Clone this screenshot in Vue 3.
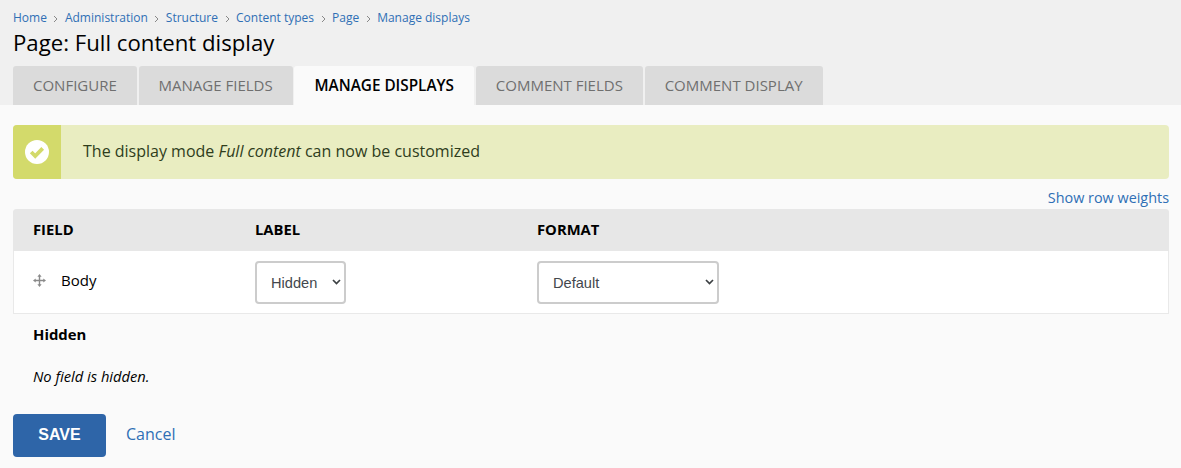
<script setup>
const crumbs = ["Home", "Administration", "Structure", "Content types", "Page", "Manage displays"];
const tabs = [
  { name: "CONFIGURE", active: false },
  { name: "MANAGE FIELDS", active: false },
  { name: "MANAGE DISPLAYS", active: true },
  { name: "COMMENT FIELDS", active: false },
  { name: "COMMENT DISPLAY", active: false },
];
</script>

<template>
  <div class="page">
    <header class="page-header">
      <nav class="breadcrumb">
        <template v-for="(crumb, index) in crumbs" :key="crumb">
          <svg v-if="index" class="crumb-sep" width="5" height="8" viewBox="0 0 5 8">
            <path d="M1 1l3 3-3 3" fill="none" stroke="#888" stroke-width="1" />
          </svg>
          <a href="#">{{ crumb }}</a>
        </template>
      </nav>
      <h1 class="page-title">Page: Full content display</h1>
      <ul class="tabs">
        <li v-for="tab in tabs" :key="tab.name" class="tab" :class="{ active: tab.active }">
          {{ tab.name }}
        </li>
      </ul>
    </header>

    <main class="main-content">
      <div class="message">
        <div class="message-icon">
          <svg width="24" height="24" viewBox="0 0 24 24">
            <circle cx="12" cy="12" r="12" fill="#fff" />
            <path d="M6.2 12l4 4 7.500-7.700" fill="none" stroke="#d3da6b" stroke-width="3.800" />
          </svg>
        </div>
        <p class="message-text">The display mode <em>Full content</em> can now be customized</p>
      </div>

      <div class="weights-row"><a href="#">Show row weights</a></div>

      <div class="field-table">
        <div class="table-row table-head">
          <div>FIELD</div>
          <div>LABEL</div>
          <div>FORMAT</div>
        </div>
        <div class="table-row table-body">
          <div class="field-name">
            <svg class="drag-handle" width="13" height="13" viewBox="0 0 13 13">
              <path
                d="M6.5 0L8.6 2.700H7.200V5.800h3.100V4.400L13 6.500l-2.700 2.100V7.200H7.200v3.100h1.400L6.500 13l-2.100-2.700h1.400V7.200H2.700v1.400L0 6.500l2.700-2.100v1.400h3.100V2.700H4.400z"
                fill="#8a8a8a"
              />
            </svg>
            <span>Body</span>
          </div>
          <div>
            <div class="select-wrap label-select">
              <select aria-label="Label">
                <option>Hidden</option>
                <option>Above</option>
                <option>Inline</option>
              </select>
              <svg class="chevron" width="9" height="6" viewBox="0 0 9 6">
                <path d="M1 1l3.500 3.500L8 1" fill="none" stroke="#3c4043" stroke-width="1.700" />
              </svg>
            </div>
          </div>
          <div>
            <div class="select-wrap format-select">
              <select aria-label="Format">
                <option>Default</option>
                <option>Summary</option>
                <option>Trimmed</option>
              </select>
              <svg class="chevron" width="9" height="6" viewBox="0 0 9 6">
                <path d="M1 1l3.500 3.500L8 1" fill="none" stroke="#3c4043" stroke-width="1.700" />
              </svg>
            </div>
          </div>
        </div>
      </div>

      <h2 class="hidden-title">Hidden</h2>
      <p class="hidden-note">No field is hidden.</p>

      <div class="actions">
        <button type="button" class="save-button">SAVE</button>
        <a href="#" class="cancel-link">Cancel</a>
      </div>
    </main>
  </div>
</template>

<style scoped>
.page {
  width: 1181px;
  height: 468px;
  overflow: hidden;
  background: #fafafa;
  color: #000;
  font-family: "Open Sans", sans-serif;
}

a {
  color: #2f6fb5;
  text-decoration: none;
}

.page-header {
  height: 105px;
  padding: 10px 13px 0;
  box-sizing: border-box;
  background: #f0f0f0;
}

.breadcrumb {
  display: flex;
  align-items: center;
  height: 16px;
  font-size: 12px;
  line-height: 16px;
}

.crumb-sep {
  margin: 1px 6.500px 0 6.500px;
}

.page-title {
  margin: 3px 0 0;
  font-size: 22.200px;
  line-height: 28px;
  font-weight: 400;
}

.tabs {
  display: flex;
  gap: 1.800px;
  margin: 9px 0 0;
  padding: 0;
  list-style: none;
}

.tab {
  height: 39px;
  padding: 0 20px;
  border-radius: 3px 3px 0 0;
  background: #dbdbdb;
  color: #6f6f6f;
  font-size: 15px;
  line-height: 39px;
}

.tab.active {
  background: #fafafa;
  color: #000;
  font-size: 15.300px;
  font-weight: 600;
}

.main-content {
  padding: 20px 12px 0 13px;
}

.message {
  display: flex;
  align-items: center;
  height: 54px;
  border-radius: 4px;
  overflow: hidden;
  background: #e9edc1;
}

.message-icon {
  display: flex;
  align-items: center;
  justify-content: center;
  flex: 0 0 48px;
  height: 100%;
  background: #d3da6b;
}

.message-text {
  margin: -2px 0 0 22px;
  color: #2f3d1c;
  font-size: 16px;
  line-height: 22px;
}

.weights-row {
  height: 30px;
  text-align: right;
  font-size: 14.400px;
  line-height: 38px;
}

.field-table {
  border: 1px solid #e9e9e9;
  border-top: 0;
  border-radius: 4px 4px 0 0;
  background: #fff;
}

.table-row {
  display: grid;
  grid-template-columns: 222px 282px 1fr;
  padding-left: 19px;
}

.table-head {
  height: 42px;
  margin: 0 -1px;
  padding: 0 0 2px 20px;
  box-sizing: border-box;
  align-items: center;
  border-radius: 4px 4px 0 0;
  background: #e7e7e7;
  font-size: 14.800px;
  font-weight: 700;
}

.table-body {
  height: 62px;
  align-items: center;
  font-size: 15px;
}

.field-name {
  display: flex;
  align-items: center;
  gap: 15px;
  margin-top: -4px;
}

.select-wrap {
  position: relative;
  height: 43px;
  margin-top: 1px;
  box-sizing: border-box;
}

.select-wrap select {
  width: 100%;
  height: 100%;
  padding: 0 0 0 14px;
  border: 2px solid #ccc;
  border-radius: 4px;
  background: #fff;
  color: #43474d;
  font-family: "Liberation Sans", Arial, sans-serif;
  font-size: 14.600px;
  appearance: none;
}

.label-select {
  width: 91px;
}

.format-select {
  width: 182px;
}

.chevron {
  position: absolute;
  top: 18px;
  right: 5px;
  pointer-events: none;
}

.hidden-title {
  margin: 11px 0 0 20px;
  font-size: 14.900px;
  line-height: 19px;
  font-weight: 700;
}

.hidden-note {
  margin: 23px 0 0 20px;
  font-size: 14.700px;
  line-height: 19px;
  font-style: italic;
}

.actions {
  display: flex;
  align-items: center;
  gap: 20px;
  margin-top: 28px;
}

.save-button {
  width: 93px;
  height: 43px;
  padding: 0 0 2px;
  border: 0;
  border-radius: 4px;
  background: #2e65a8;
  color: #fff;
  font-family: "Liberation Sans", Arial, sans-serif;
  font-size: 16px;
  font-weight: 700;
}

.cancel-link {
  margin-bottom: 4px;
  font-size: 16px;
}
</style>
